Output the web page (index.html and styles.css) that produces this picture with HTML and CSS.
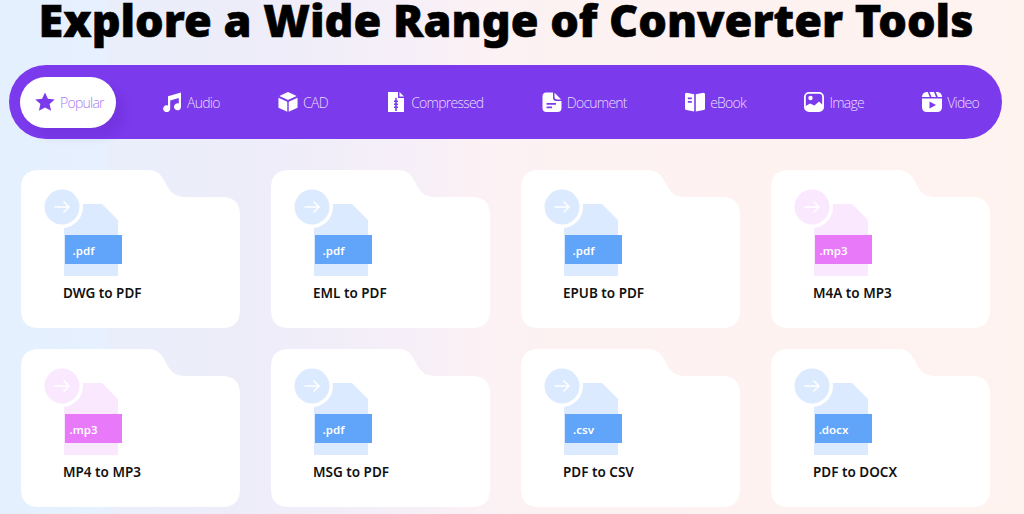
FILE: index.html
```html
<!DOCTYPE html>
<html lang="en">
<head>
  <meta charset="UTF-8" />
  <meta name="viewport" content="width=device-width, initial-scale=1" />
  <title>Converter Tools</title>
  <link rel="stylesheet" href="styles.css">
</head>
<body>

<svg class="defs" width="0" height="0" aria-hidden="true">
  <symbol id="docIcon" viewBox="0 0 82 90">
    <path class="pale" d="M23 18H61L77 34V90H23Z" />
    <circle class="ring" cx="21" cy="21" r="21" />
    <circle class="pale" cx="21" cy="21" r="17.5" />
    <path class="arrow" d="M13.5 21H28M22.5 15.5L28 21L22.5 26.5" />
  </symbol>
</svg>

<h1>Explore a Wide Range of Converter Tools</h1>

<nav class="tabs" aria-label="Categories">
  <a href="#" class="tab active">
    <svg viewBox="0 0 20 20"><path d="M10 .4l2.900 6.300 6.800.7-5.100 4.600 1.500 6.800L10 15.400l-6.100 3.400 1.500-6.800L.3 7.400l6.800-.7z" /></svg>
    Popular
  </a>
  <a href="#" class="tab">
    <svg viewBox="0 0 20 20"><path d="M6 4.300L19 .5v14.300a3.500 3.500 0 1 1-2.200-3.200V6L8.200 8.400v8.200a3.500 3.500 0 1 1-2.200-3.200z" /></svg>
    Audio
  </a>
  <a href="#" class="tab">
    <svg viewBox="0 0 22 22"><path d="M11 0l9.500 4.400-9.500 4.500-9.500-4.500zM.5 6.200l9.700 4.600v11L.5 17.200zM21.500 6.200l-9.700 4.600v11l9.700-4.600z" /></svg>
    CAD
  </a>
  <a href="#" class="tab">
    <svg viewBox="0 0 20 20"><path fill-rule="evenodd" d="M2 0H12V6H18V20H2ZM13.500 0L18 4.500H13.500ZM9.200 6.500L10 5.500L10.800 6.500V8.500H12V10H10.800V11.500H12V13H10.800V14.500H12V16H10.800V19H9.200V16H8V14.500H9.200V13H8V11.500H9.200V10H8V8.500H9.200Z" /></svg>
    Compressed
  </a>
  <a href="#" class="tab">
    <svg viewBox="0 0 20 20"><path fill-rule="evenodd" d="M4 .5H11V5.500A3.500 3.500 0 0 0 14.500 9H19.500V16A4 4 0 0 1 15.500 20H4.500A4 4 0 0 1 .5 16V4A4 4 0 0 1 4 .5ZM4.500 11V12.800H14V11ZM4.500 14.500V16.300H10V14.500Z" /><path d="M12.500 .8L19.200 7.500H15.500A3 3 0 0 1 12.500 4.500Z" /></svg>
    Document
  </a>
  <a href="#" class="tab">
    <svg viewBox="0 0 20 20"><path fill-rule="evenodd" d="M1.500 .8L9.200 2.200V19.500L1.500 18A1.500 1.500 0 0 1 0 16.500V2.300A1.500 1.500 0 0 1 1.500 .8ZM2.800 5.500V7.200H6.800V5.500ZM2.800 9V10.700H6.800V9Z" /><path d="M18.500 .8L10.800 2.200V19.500L18.500 18A1.500 1.500 0 0 0 20 16.500V2.300A1.500 1.500 0 0 0 18.500 .8Z" /></svg>
    eBook
  </a>
  <a href="#" class="tab">
    <svg viewBox="0 0 20 20"><path fill-rule="evenodd" d="M5 0H15A5 5 0 0 1 20 5V15A5 5 0 0 1 15 20H5A5 5 0 0 1 0 15V5A5 5 0 0 1 5 0ZM5 1.800A3.200 3.200 0 0 0 1.800 5V14L6 11.500L10.500 13.500L15 9.500L18.200 12.500V5A3.200 3.200 0 0 0 15 1.800Z" /><circle cx="6.500" cy="6" r="2.200" /></svg>
    Image
  </a>
  <a href="#" class="tab">
    <svg viewBox="0 0 20 20"><path fill-rule="evenodd" d="M0 6.500H20V15.500A4.500 4.500 0 0 1 15.500 20H4.500A4.500 4.500 0 0 1 0 15.500ZM7.500 9.500V16.500L14 13Z" /><path d="M4.500 0H5.800L7.800 5H0A4.800 4.800 0 0 1 4.500 0ZM7.500 0H12L14 5H9.500ZM13.800 0H15.500A4.800 4.800 0 0 1 20 5H15.800Z" /></svg>
    Video
  </a>
</nav>

<main class="cards">
  <a href="#" class="card blue">
    <div class="doc"><svg class="doc-art"><use href="#docIcon" /></svg><span class="ext">.pdf</span></div>
    <h3>DWG to PDF</h3>
  </a>
  <a href="#" class="card blue">
    <div class="doc"><svg class="doc-art"><use href="#docIcon" /></svg><span class="ext">.pdf</span></div>
    <h3>EML to PDF</h3>
  </a>
  <a href="#" class="card blue">
    <div class="doc"><svg class="doc-art"><use href="#docIcon" /></svg><span class="ext">.pdf</span></div>
    <h3>EPUB to PDF</h3>
  </a>
  <a href="#" class="card pink">
    <div class="doc"><svg class="doc-art"><use href="#docIcon" /></svg><span class="ext">.mp3</span></div>
    <h3>M4A to MP3</h3>
  </a>
  <a href="#" class="card pink">
    <div class="doc"><svg class="doc-art"><use href="#docIcon" /></svg><span class="ext">.mp3</span></div>
    <h3>MP4 to MP3</h3>
  </a>
  <a href="#" class="card blue">
    <div class="doc"><svg class="doc-art"><use href="#docIcon" /></svg><span class="ext">.pdf</span></div>
    <h3>MSG to PDF</h3>
  </a>
  <a href="#" class="card blue">
    <div class="doc"><svg class="doc-art"><use href="#docIcon" /></svg><span class="ext">.csv</span></div>
    <h3>PDF to CSV</h3>
  </a>
  <a href="#" class="card blue">
    <div class="doc"><svg class="doc-art"><use href="#docIcon" /></svg><span class="ext">.docx</span></div>
    <h3>PDF to DOCX</h3>
  </a>
</main>

</body>
</html>
```

FILE: styles.css
```css
html, body {
  margin: 0;
  padding: 0;
  height: 514px;
  overflow: hidden;
}

body {
  font-family: "Noto Sans", "Open Sans", sans-serif;
  background: linear-gradient(90deg, #e5f0fe 0, #e6f0fe 108px, #eaeefb 109px, #eeedf9 270px, #f6eff8 410px, #fcf1f4 480px, #fdf2f2 560px, #fef3ef 1024px);
  color: #000;
}

.defs {
  position: absolute;
}

h1 {
  margin: 0 0 0 -12px;
  height: 65px;
  font-size: 45px;
  line-height: 40px;
  font-weight: 900;
  -webkit-text-stroke: 0.6px #000;
  text-align: center;
  white-space: nowrap;
}

/* Barra roxa de categorias */
.tabs {
  display: flex;
  justify-content: space-between;
  align-items: center;
  box-sizing: border-box;
  width: 993px;
  height: 74px;
  margin-left: 9px;
  padding: 0 11px;
  background: #7c3aed;
  border-radius: 37px;
}

.tab {
  display: flex;
  align-items: center;
  gap: 5px;
  height: 51px;
  padding: 0 12px 0 15px;
  border-radius: 26px;
  font-family: "Open Sans", sans-serif;
  font-size: 14px;
  font-weight: 300;
  letter-spacing: -0.75px;
  color: #e9defc;
  text-decoration: none;
}

.tab svg {
  width: 20px;
  height: 20px;
  fill: #fff;
  flex: none;
}

.tab.active {
  background: #fff;
  color: #a47cf3;
  box-shadow: 9px 9px 10px rgba(70, 20, 150, 0.14);
}

.tab.active svg {
  fill: #7c3aed;
}

/* Cards em forma de pasta */
.cards {
  display: grid;
  grid-template-columns: repeat(4, 219px);
  grid-auto-rows: 158px;
  column-gap: 31px;
  row-gap: 21px;
  margin: 31px 0 0 21px;
}

.card {
  display: block;
  box-sizing: border-box;
  padding: 16px 0 0 20px;
  background: #fff;
  color: #111;
  text-decoration: none;
  clip-path: path("M0 18Q0 0 18 0H126C136 0 140 4 144 12C149 22 153 27 165 27H201Q219 27 219 45V140Q219 158 201 158H18Q0 158 0 140Z");
}

.blue {
  --pale: #dbeafe;
  --strong: #60a5fa;
}

.pink {
  --pale: #fae8ff;
  --strong: #e879f9;
}

.doc {
  position: relative;
  width: 82px;
  height: 90px;
}

.doc-art {
  display: block;
  width: 82px;
  height: 90px;
}

.pale {
  fill: var(--pale);
}

.ring {
  fill: #fff;
}

.arrow {
  fill: none;
  stroke: #fff;
  stroke-width: 1.500;
}

/* Etiqueta da extensao, por cima do arquivo */
.ext {
  position: absolute;
  left: 24px;
  top: 49px;
  box-sizing: border-box;
  width: 57px;
  height: 29px;
  padding: 3px 20px 0 0;
  background: var(--strong);
  color: #fff;
  font-size: 11.500px;
  font-weight: 600;
  line-height: 26px;
  text-align: center;
}

.card h3 {
  margin: 6px 0 0 22px;
  font-size: 13.500px;
  line-height: 22px;
  font-weight: 600;
  white-space: nowrap;
}
```
